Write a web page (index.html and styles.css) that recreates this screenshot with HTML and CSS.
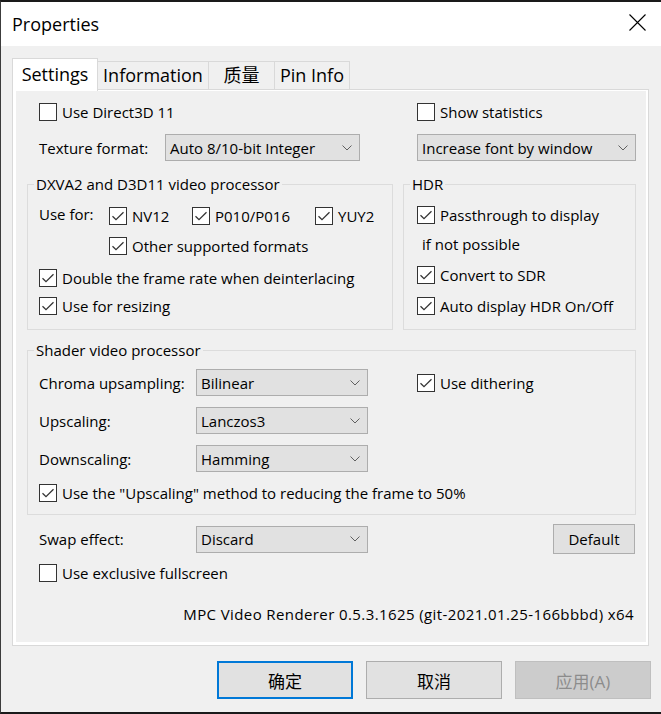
FILE: index.html
```html
<!DOCTYPE html>
<html>
<head>
<meta charset="utf-8">
<link rel="stylesheet" href="styles.css">
</head>
<body>
<div class="window">
  <div class="titlebar">
    <span class="title">Properties</span>
    <svg class="close" width="17" height="17" viewBox="0 0 17 17"><path d="M0.5 0.5 L16.5 16.5 M16.5 0.5 L0.5 16.5" stroke="#000" stroke-width="1.1" fill="none"/></svg>
  </div>
  <div class="tabs">
    <div class="tab active t1">Settings</div>
    <div class="tab t2">Information</div>
    <div class="tab t3">质量</div>
    <div class="tab t4">Pin Info</div>
  </div>
  <div class="panel">
    <div class="page">
      <div class="toprow r1">
        <div class="leftcol">
          <div class="cb"><span class="box"></span><span>Use Direct3D 11</span></div>
        </div>
        <div class="cb"><span class="box"></span><span>Show statistics</span></div>
      </div>
      <div class="toprow r2">
        <div class="leftcol">
          <span class="lbl-tex">Texture format:</span>
          <div class="sel w-tex"><span>Auto 8/10-bit Integer</span><svg class="chev" width="10" height="6" viewBox="0 0 10 6"><path d="M0.5 0.5 L5 5 L9.5 0.5" stroke="#606060" fill="none"/></svg></div>
        </div>
        <div class="sel w-right"><span>Increase font by window</span><svg class="chev" width="10" height="6" viewBox="0 0 10 6"><path d="M0.5 0.5 L5 5 L9.5 0.5" stroke="#606060" fill="none"/></svg></div>
      </div>

      <div class="groups">
        <fieldset class="g-dxva">
          <legend>DXVA2 and D3D11 video processor</legend>
          <div class="gbody dxva">
            <div class="d-row d1">
              <span class="usefor">Use for:</span>
              <div class="cb c-nv12"><span class="box"><svg viewBox="0 0 16 16"><path d="M2.5 8.2 L6 11.7 L13.5 4.2"/></svg></span><span>NV12</span></div>
              <div class="cb c-p010"><span class="box"><svg viewBox="0 0 16 16"><path d="M2.5 8.2 L6 11.7 L13.5 4.2"/></svg></span><span>P010/P016</span></div>
              <div class="cb"><span class="box"><svg viewBox="0 0 16 16"><path d="M2.5 8.2 L6 11.7 L13.5 4.2"/></svg></span><span>YUY2</span></div>
            </div>
            <div class="d-row d2">
              <div class="cb"><span class="box"><svg viewBox="0 0 16 16"><path d="M2.5 8.2 L6 11.7 L13.5 4.2"/></svg></span><span>Other supported formats</span></div>
            </div>
            <div class="d-row d3">
              <div class="cb"><span class="box"><svg viewBox="0 0 16 16"><path d="M2.5 8.2 L6 11.7 L13.5 4.2"/></svg></span><span>Double the frame rate when deinterlacing</span></div>
            </div>
            <div class="d-row d4">
              <div class="cb"><span class="box"><svg viewBox="0 0 16 16"><path d="M2.5 8.2 L6 11.7 L13.5 4.2"/></svg></span><span>Use for resizing</span></div>
            </div>
          </div>
        </fieldset>
        <fieldset class="g-hdr">
          <legend>HDR</legend>
          <div class="gbody hdr">
            <div class="h-row h1">
              <div class="cb"><span class="box"><svg viewBox="0 0 16 16"><path d="M2.5 8.2 L6 11.7 L13.5 4.2"/></svg></span><span>Passthrough to display</span></div>
            </div>
            <div class="h-row h2"><span class="ifnot">if not possible</span></div>
            <div class="h-row h3">
              <div class="cb"><span class="box"><svg viewBox="0 0 16 16"><path d="M2.5 8.2 L6 11.7 L13.5 4.2"/></svg></span><span>Convert to SDR</span></div>
            </div>
            <div class="h-row h4">
              <div class="cb"><span class="box"><svg viewBox="0 0 16 16"><path d="M2.5 8.2 L6 11.7 L13.5 4.2"/></svg></span><span>Auto display HDR On/Off</span></div>
            </div>
          </div>
        </fieldset>
      </div>

      <fieldset class="g-shader">
        <legend>Shader video processor</legend>
        <div class="gbody shader">
          <div class="s-row s1">
            <span class="slbl">Chroma upsampling:</span>
            <div class="sel w-sh"><span>Bilinear</span><svg class="chev" width="10" height="6" viewBox="0 0 10 6"><path d="M0.5 0.5 L5 5 L9.5 0.5" stroke="#606060" fill="none"/></svg></div>
            <div class="cb c-dither"><span class="box"><svg viewBox="0 0 16 16"><path d="M2.5 8.2 L6 11.7 L13.5 4.2"/></svg></span><span>Use dithering</span></div>
          </div>
          <div class="s-row s2">
            <span class="slbl">Upscaling:</span>
            <div class="sel w-sh"><span>Lanczos3</span><svg class="chev" width="10" height="6" viewBox="0 0 10 6"><path d="M0.5 0.5 L5 5 L9.5 0.5" stroke="#606060" fill="none"/></svg></div>
          </div>
          <div class="s-row s3">
            <span class="slbl">Downscaling:</span>
            <div class="sel w-sh"><span>Hamming</span><svg class="chev" width="10" height="6" viewBox="0 0 10 6"><path d="M0.5 0.5 L5 5 L9.5 0.5" stroke="#606060" fill="none"/></svg></div>
          </div>
          <div class="s-row s4">
            <div class="cb"><span class="box"><svg viewBox="0 0 16 16"><path d="M2.5 8.2 L6 11.7 L13.5 4.2"/></svg></span><span>Use the "Upscaling" method to reducing the frame to 50%</span></div>
          </div>
        </div>
      </fieldset>

      <div class="swaprow">
        <span class="slbl">Swap effect:</span>
        <div class="sel w-sh"><span>Discard</span><svg class="chev" width="10" height="6" viewBox="0 0 10 6"><path d="M0.5 0.5 L5 5 L9.5 0.5" stroke="#606060" fill="none"/></svg></div>
        <div class="defbtn">Default</div>
      </div>
      <div class="exrow">
        <div class="cb"><span class="box"></span><span>Use exclusive fullscreen</span></div>
      </div>
      <div class="version">MPC Video Renderer 0.5.3.1625 (git-2021.01.25-166bbbd) x64</div>
    </div>
  </div>
  <div class="buttons">
    <div class="btn primary">确定</div>
    <div class="btn">取消</div>
    <div class="btn disabled">应用(A)</div>
  </div>
</div>
</body>
</html>
```

FILE: styles.css
```css
* { box-sizing: border-box; }
html, body { margin: 0; padding: 0; }
body {
  width: 661px;
  height: 714px;
  overflow: hidden;
  background: #f0f0f0;
  font-family: "Open Sans", "Noto Sans CJK SC", sans-serif;
  font-size: 15px;
  color: #000;
}
.window {
  width: 661px;
  height: 714px;
  border-top: 2px solid #1a1a1a;
  border-left: 1px solid #3c3c3c;
  border-bottom: 2px solid #1a1a1a;
  background: #f0f0f0;
}
.titlebar {
  height: 44px;
  background: #fff;
  display: flex;
  align-items: center;
  padding-left: 11px;
}
.title { font-size: 18px; line-height: 22px; }
.close { margin-left: auto; margin-right: 15px; align-self: flex-start; margin-top: 12px; }

.tabs {
  margin-top: 12px;
  margin-left: 11px;
  height: 31px;
  display: flex;
  align-items: flex-end;
}
.tab {
  height: 28px;
  border: 1px solid #d9d9d9;
  border-bottom: none;
  margin-left: -1px;
  background: #f0f0f0;
  font-size: 18px;
  line-height: 26px;
  text-align: center;
  white-space: nowrap;
}
.tab.active {
  height: 33px;
  margin-left: 0;
  margin-bottom: -2px;
  background: #fff;
  position: relative;
  z-index: 1;
  line-height: 30px;
}
.t1 { width: 86px; }
.t2 { width: 112px; }
.t3 { width: 67px; }
.t4 { width: 76px; }

.panel {
  margin-left: 11px;
  width: 637px;
  height: 557px;
  border: 1px solid #d9d9d9;
  background: #f0f0f0;
}
.page {
  height: 100%;
  border-style: solid;
  border-color: #fff;
  border-width: 1px 2px 3px 3px;
}

/* checkbox */
.cb {
  display: flex;
  align-items: center;
  gap: 5px;
  height: 18px;
  line-height: 18px;
  white-space: nowrap;
}
.box {
  flex: none;
  width: 18px;
  height: 18px;
  border: 1px solid #333;
  background: #fff;
  display: flex;
}
.box svg {
  width: 16px;
  height: 16px;
  fill: none;
  stroke: #333;
  stroke-width: 1.25;
}

/* select */
.sel {
  display: flex;
  align-items: center;
  height: 27px;
  border: 1px solid #adadad;
  background: #e1e1e1;
  padding-left: 4px;
  white-space: nowrap;
  flex: none;
}
.chev { margin-left: auto; margin-right: 7px; flex: none; }
.w-tex { width: 195px; }
.w-right { width: 219px; }
.w-sh { width: 172px; }

.toprow { display: flex; align-items: center; padding-left: 23px; }
.toprow.r1 { margin-top: 12px; height: 18px; }
.toprow.r2 { margin-top: 13px; height: 27px; }
.leftcol { width: 378px; display: flex; align-items: center; flex: none; }
.lbl-tex { width: 126px; flex: none; }

fieldset {
  margin: 0;
  padding: 0;
  border: 1px solid #dcdcdc;
  min-width: 0;
}
legend {
  padding: 0 2px;
  margin-left: 6px;
  line-height: 18px;
  font-size: 15px;
}
.groups {
  display: flex;
  gap: 10px;
  margin-top: 14px;
  margin-left: 11px;
}
.g-dxva { width: 366px; flex: none; }
.g-hdr { width: 233px; flex: none; }

.dxva { padding: 0 0 14px 11px; }
.d-row { display: flex; align-items: flex-start; }
.d1 { margin-top: 14px; }
.d2 { margin-top: 12px; padding-left: 70px; }
.d3 { margin-top: 14px; }
.d4 { margin-top: 10px; }
.usefor { width: 70px; flex: none; line-height: 14px; }
.c-nv12 { width: 83px; flex: none; }
.c-p010 { width: 123px; flex: none; }

.hdr { padding: 0 0 0 13px; }
.h1 { margin-top: 13px; }
.h2 { margin-top: 11px; line-height: 18px; padding-left: 5px; }
.h3 { margin-top: 13px; }
.h4 { margin-top: 13px; }

.g-shader { width: 609px; margin-top: 11px; margin-left: 11px; }
.shader { padding: 0 0 12px 11px; }
.s-row { display: flex; align-items: center; }
.s1 { margin-top: 10px; height: 27px; }
.s2 { margin-top: 11px; height: 27px; }
.s3 { margin-top: 11px; height: 27px; }
.s4 { margin-top: 12px; height: 18px; }
.slbl { width: 157px; flex: none; white-space: nowrap; }
.c-dither { margin-left: 49px; }

.swaprow {
  margin-top: 9px;
  height: 30px;
  display: flex;
  align-items: center;
  padding-left: 23px;
  padding-right: 11px;
}
.defbtn {
  margin-left: auto;
  width: 82px;
  height: 30px;
  border: 1px solid #adadad;
  background: #e1e1e1;
  display: flex;
  align-items: center;
  justify-content: center;
}
.exrow { margin-top: 10px; padding-left: 23px; }
.version {
  margin-top: 23px;
  line-height: 18px;
  text-align: right;
  padding-right: 12px;
  white-space: nowrap;
  letter-spacing: 0.4px;
}

.buttons {
  margin-top: 15px;
  display: flex;
  justify-content: flex-end;
  gap: 13px;
  padding-right: 10px;
}
.btn {
  width: 136px;
  height: 38px;
  border: 1px solid #adadad;
  background: #e1e1e1;
  font-size: 17px;
  display: flex;
  align-items: center;
  justify-content: center;
}
.btn.primary { border: 2px solid #0078d7; }
.btn.disabled { background: #cccccc; border-color: #bfbfbf; color: #8c8c8c; }
```
